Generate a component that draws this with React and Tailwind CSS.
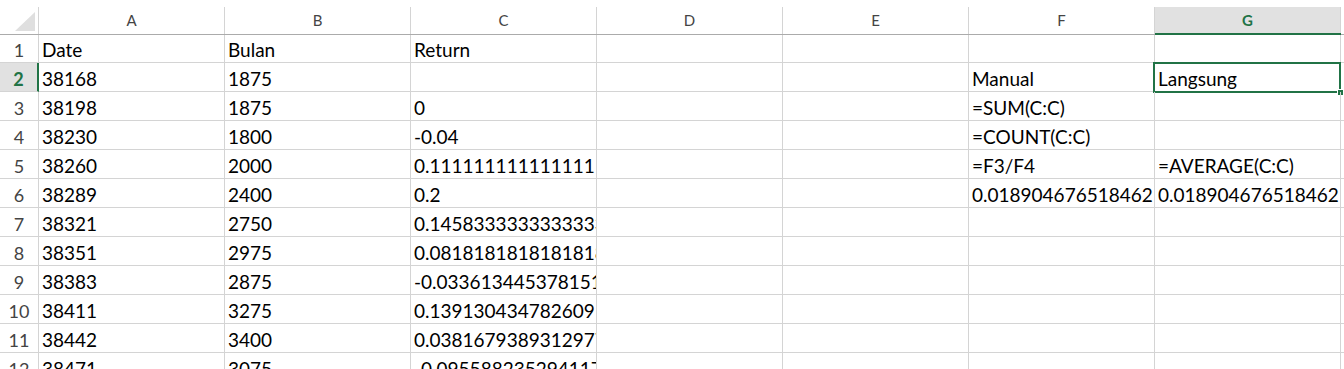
import React from "react";

const COLS = ["A", "B", "C", "D", "E", "F", "G"];

// cell values per row: A..G
const ROWS = [
  ["Date", "Bulan", "Return", "", "", "", ""],
  ["38168", "1875", "", "", "", "Manual", "Langsung"],
  ["38198", "1875", "0", "", "", "=SUM(C:C)", ""],
  ["38230", "1800", "-0.04", "", "", "=COUNT(C:C)", ""],
  ["38260", "2000", "0.111111111111111", "", "", "=F3/F4", "=AVERAGE(C:C)"],
  ["38289", "2400", "0.2", "", "", "0.018904676518462", "0.018904676518462"],
  ["38321", "2750", "0.1458333333333333", "", "", "", ""],
  ["38351", "2975", "0.0818181818181818", "", "", "", ""],
  ["38383", "2875", "-0.0336134453781513", "", "", "", ""],
  ["38411", "3275", "0.139130434782609", "", "", "", ""],
  ["38442", "3400", "0.0381679389312977", "", "", "", ""],
  ["38471", "3075", "-0.0955882352941176", "", "", "", ""],
];

const ACTIVE_COL = 6; // G
const ACTIVE_ROW = 1; // row 2

function ColumnHeader({ label, active }) {
  if (active) {
    return (
      <div className="flex h-[35px] w-[186px] flex-none flex-col border-b-2 border-[#217346]">
        <div className="h-[7px]" />
        <div className="flex flex-1 items-end justify-center border-r border-[#d4d4d4] bg-[#e1e1e1] pb-[5px] text-[15px] font-bold leading-[15px] text-[#217346]">
          {label}
        </div>
      </div>
    );
  }
  return (
    <div className="flex h-[35px] w-[186px] flex-none flex-col border-b border-[#ababab]">
      <div className="h-[7px]" />
      <div className="flex flex-1 items-end justify-center border-r border-[#d4d4d4] pb-[6px] text-[15px] leading-[15px] text-[#444]">
        {label}
      </div>
    </div>
  );
}

function Cell({ value, active }) {
  return (
    <div className="relative flex h-full w-[186px] flex-none items-end border-r border-b border-[#d4d4d4]">
      <div className="w-full overflow-hidden whitespace-nowrap pl-[3px] pb-[1px] leading-[22px]">
        {value}
      </div>
      {active && (
        <>
          <div className="absolute -left-[2px] -top-[1px] h-[31px] w-[188px] border-2 border-[#217346]" />
          <div className="absolute left-[182px] top-[26px] h-[7px] w-[7px] border border-white bg-[#217346]" />
        </>
      )}
    </div>
  );
}

export default function App() {
  return (
    <div className="h-[369px] w-[1344px] overflow-hidden bg-white text-[19px] text-black [font-family:Lato,'Liberation_Sans',sans-serif]">
      {/* column headers */}
      <div className="flex">
        <div className="flex h-[35px] w-[39px] flex-none flex-col border-b border-[#ababab]">
          <div className="h-[7px]" />
          <div className="flex flex-1 items-end justify-end border-r border-[#d4d4d4] pr-[3px] pb-[3px]">
            <svg width="20" height="19" viewBox="0 0 20 19">
              <polygon points="20,0 20,19 0,19" fill="#dfdfdf" />
            </svg>
          </div>
        </div>
        {COLS.map((c, i) => (
          <ColumnHeader key={c} label={c} active={i === ACTIVE_COL} />
        ))}
        <div className="h-[35px] flex-1 border-b border-[#ababab]" />
      </div>

      {/* rows */}
      {ROWS.map((row, r) => {
        const selected = r === ACTIVE_ROW;
        return (
          <div key={r} className={r === 0 ? "flex h-[28px]" : "flex h-[29px]"}>
            {selected ? (
              <div className="flex h-full w-[39px] flex-none items-end justify-center border-r-2 border-b border-[#d4d4d4] border-r-[#217346] bg-[#e1e1e1] pb-[3px] text-[18px] font-bold leading-[18px] text-[#217346]">
                {r + 1}
              </div>
            ) : (
              <div className="flex h-full w-[39px] flex-none items-end justify-center border-r border-b border-[#d4d4d4] pb-[3px] text-[18px] leading-[18px] text-[#444]">
                {r + 1}
              </div>
            )}
            {row.map((v, c) => (
              <Cell key={c} value={v} active={selected && c === ACTIVE_COL} />
            ))}
            <div className="h-full flex-1 border-b border-[#d4d4d4]" />
          </div>
        );
      })}
    </div>
  );
}
